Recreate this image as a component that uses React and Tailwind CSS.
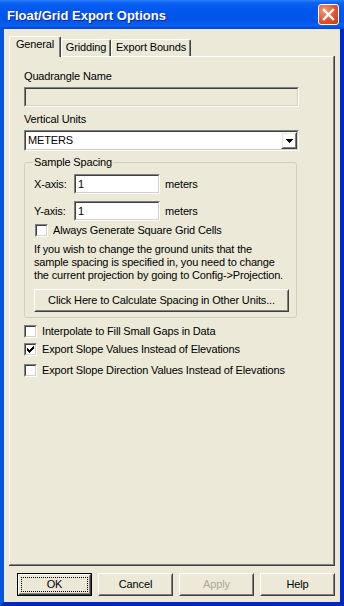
import React from "react";

function Sunken({ className = "", inner = "", children }) {
  return (
    <div className={`border border-t-[#808080] border-l-[#808080] border-b-white border-r-white ${className}`}>
      <div className={`h-full border border-t-[#404040] border-l-[#404040] border-b-[#d4d0c8] border-r-[#d4d0c8] ${inner}`}>
        {children}
      </div>
    </div>
  );
}

function Raised({ className = "", children }) {
  return (
    <div className={`border border-t-white border-l-white border-b-[#404040] border-r-[#404040] ${className}`}>
      <div className="h-full border border-t-[#ece9d8] border-l-[#ece9d8] border-b-[#808080] border-r-[#808080] flex items-center justify-center">
        {children}
      </div>
    </div>
  );
}

function Checkbox({ checked }) {
  return (
    <Sunken className="w-[13px] h-[13px] shrink-0" inner="bg-white flex items-center justify-center">
      {checked && (
        <svg width="9" height="9" viewBox="0 0 9 9" shapeRendering="crispEdges">
          <path d="M1 3h1v1h1v1h1V4h1V3h1V2h1V1h1v3H7v1H6v1H5v1H4v1H3V7H2V6H1z" fill="black" />
        </svg>
      )}
    </Sunken>
  );
}

function CheckRow({ checked, label, className = "" }) {
  return (
    <div className={`flex items-center gap-[5px] ${className}`}>
      <Checkbox checked={checked} />
      <span>{label}</span>
    </div>
  );
}

function Tab({ label, active, width }) {
  return (
    <div
      className={`flex justify-center border-l border-t border-l-white border-t-white border-r border-r-[#404040] shadow-[inset_-1px_0_0_#808080] rounded-tl-[2px] rounded-tr-[2px] ${
        active ? "h-[21px] -mb-px relative z-10 bg-[#ece9d8] pt-[1px]" : "h-[17px] pt-[1px]"
      } ${width}`}
    >
      {label}
    </div>
  );
}

function Button({ children, disabled, isDefault }) {
  if (isDefault) {
    return (
      <div className="w-[75px] h-[23px] border border-black">
        <Raised className="h-full">
          <div className="w-[67px] h-[15px] border border-dotted border-black flex items-center justify-center">
            {children}
          </div>
        </Raised>
      </div>
    );
  }
  return (
    <Raised className="w-[75px] h-[23px]">
      <span className={disabled ? "text-[#aca899]" : ""}>{children}</span>
    </Raised>
  );
}

export default function App() {
  return (
    <div className="w-[344px] h-[606px] flex flex-col font-['Liberation_Sans',Arial,sans-serif] text-[11px] leading-[13px] tracking-[-0.15px] text-black select-none">
      {/* Title bar */}
      <div className="h-[29px] shrink-0 flex items-center justify-between pl-[7px] pr-[5px] bg-[linear-gradient(to_bottom,#2b80ff_0%,#0a62f5_10%,#0058ee_30%,#0054e8_70%,#0a5ff0_88%,#0046d0_100%)]">
        <span className="text-white font-bold text-[13px] leading-[15px] tracking-normal [text-shadow:1px_1px_0_#0a2a90] pt-[1px]">
          Float/Grid Export Options
        </span>
        <div className="w-[21px] h-[21px] border border-white rounded-[3px] bg-[radial-gradient(circle_at_30%_30%,#f29a78,#e0542f_55%,#c23a1a)] flex items-center justify-center">
          <svg width="19" height="19" viewBox="0 0 19 19">
            <path d="M5 5L14 14M14 5L5 14" stroke="white" strokeWidth="2.4" strokeLinecap="square" />
          </svg>
        </div>
      </div>

      {/* Client area */}
      <div className="flex-1 flex flex-col bg-[#ece9d8] border-l-4 border-r-4 border-b-4 border-l-[#0855e0] border-r-[#0028c0] border-b-[#0028c0]">
        {/* Tabs */}
        <div className="flex items-end pl-[5px] pt-[7px] h-[27px] shrink-0">
          <Tab label="General" active width="w-[52px]" />
          <Tab label="Gridding" width="w-[50px]" />
          <Tab label="Export Bounds" width="w-[80px]" />
        </div>

        {/* Tab panel */}
        <div className="mx-[5px] h-[510px] shrink-0 border-r border-b border-r-[#404040] border-b-[#404040]">
          <div className="h-full border-l border-t border-l-white border-t-white border-r border-b border-r-[#808080] border-b-[#808080] pl-[14px] pt-[13px] flex flex-col">
            <div>Quadrangle Name</div>
            <Sunken className="mt-[4px] w-[275px] h-[20px]" inner="bg-[#ece9d8]" />

            <div className="mt-[6px]">Vertical Units</div>
            <Sunken className="mt-[4px] w-[275px] h-[21px]" inner="bg-white flex items-center justify-between pl-[1px]">
              <span className="pl-[1px]">METERS</span>
              <Raised className="w-[16px] h-[17px]">
                <svg width="7" height="4" viewBox="0 0 7 4" shapeRendering="crispEdges">
                  <path d="M0 0h7v1H6v1H5v1H4v1H3V3H2V2H1V1H0z" fill="black" />
                </svg>
              </Raised>
            </Sunken>

            {/* Sample Spacing group */}
            <fieldset className="mt-[5px] w-[273px] border border-[#d0d0bf] rounded-[3px] pb-[5px] pl-[9px]">
              <legend className="ml-[-1px] px-[1px]">Sample Spacing</legend>
              <div className="flex items-center mt-[5px]">
                <span className="w-[40px]">X-axis:</span>
                <Sunken className="w-[86px] h-[20px]" inner="bg-white pl-[2px] flex items-center">1</Sunken>
                <span className="ml-[5px]">meters</span>
              </div>
              <div className="flex items-center mt-[7px]">
                <span className="w-[40px]">Y-axis:</span>
                <Sunken className="w-[86px] h-[20px]" inner="bg-white pl-[2px] flex items-center">1</Sunken>
                <span className="ml-[5px]">meters</span>
              </div>
              <CheckRow className="mt-[3px] ml-[1px]" label="Always Generate Square Grid Cells" />
              <p className="mt-[6px] pr-[12px]">
                If you wish to change the ground units that the sample spacing is specified in, you need to change the
                current projection by going to Config-&gt;Projection.
              </p>
              <Raised className="mt-[7px] w-[255px] h-[23px]">Click Here to Calculate Spacing in Other Units...</Raised>
            </fieldset>

            <CheckRow className="mt-[7px]" label="Interpolate to Fill Small Gaps in Data" />
            <CheckRow className="mt-[5px]" checked label="Export Slope Values Instead of Elevations" />
            <CheckRow className="mt-[8px]" label="Export Slope Direction Values Instead of Elevations" />
          </div>
        </div>

        {/* Buttons */}
        <div className="flex gap-[6px] pl-[13px] mt-[7px]">
          <Button isDefault>OK</Button>
          <Button>Cancel</Button>
          <Button disabled>Apply</Button>
          <Button>Help</Button>
        </div>
      </div>
    </div>
  );
}
